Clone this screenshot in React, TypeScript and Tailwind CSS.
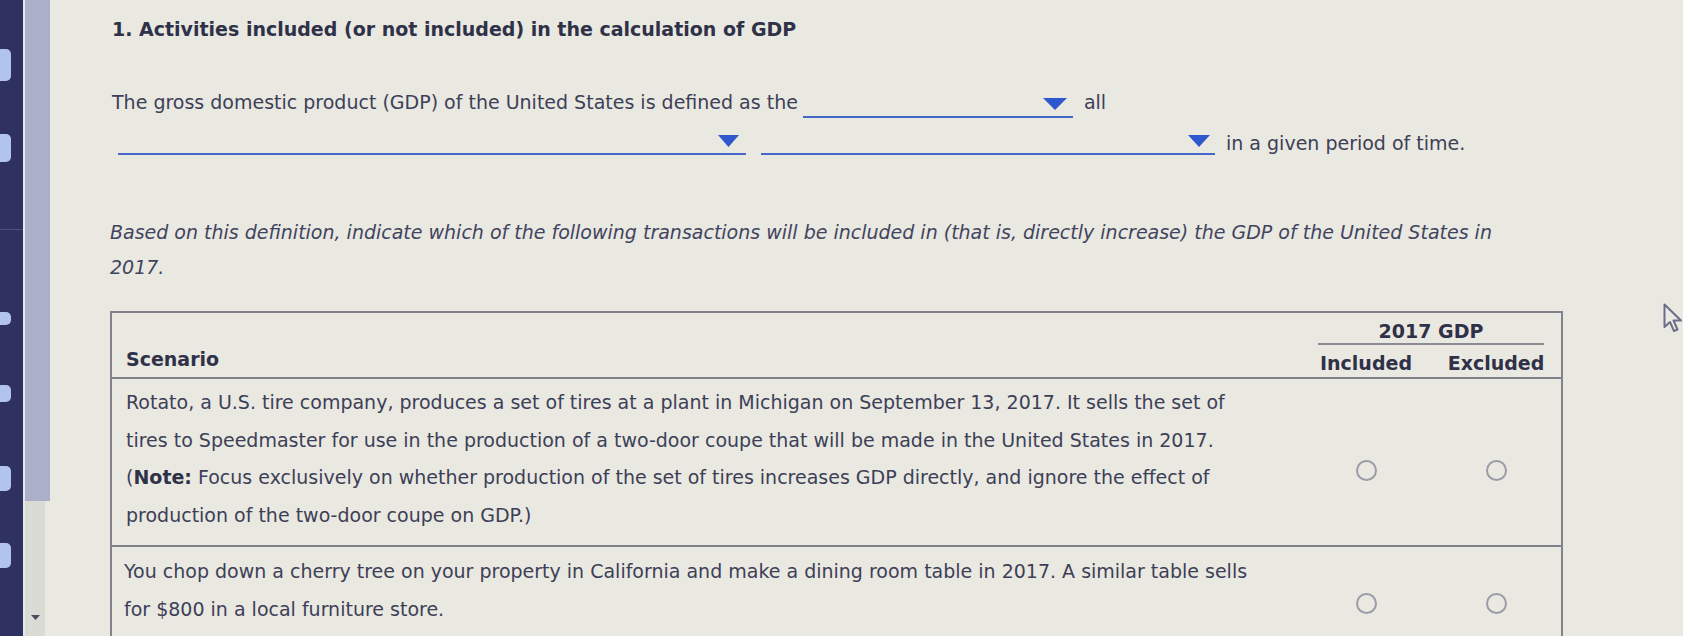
import React from 'react';

const Dropdown = ({ width, arrowW, arrowGap }: { width: string; arrowW: number; arrowGap: string }) => (
  <span className={`flex h-[28px] shrink-0 items-start justify-end border-b-2 border-[#4666c9] ${width}`}>
    <svg className={`mt-[8px] ${arrowGap}`} width={arrowW} height={12} viewBox={`0 0 ${arrowW} 12`}>
      <polygon points={`0,0 ${arrowW},0 ${arrowW / 2},12`} fill="#2f58cf" />
    </svg>
  </span>
);

const Radio = () => <span className="block h-[21px] w-[21px] rounded-full border-2 border-[#9b9ba9]" />;

const Tab = ({ h, mt }: { h: string; mt: string }) => (
  <div className={`${mt} ${h} w-[11px] rounded-r-[5px] bg-[#b3c4ec]`} />
);

export default function App() {
  return (
    <div className="relative flex h-[636px] w-[1683px] overflow-hidden bg-[#e9e8e1] font-['DejaVu_Sans',Verdana,sans-serif] text-[19px] text-[#3d3f57]">
      {/* left nav strip */}
      <div className="flex w-[23px] shrink-0 flex-col bg-[#2f3260]">
        <Tab mt="mt-[49px]" h="h-[32px]" />
        <Tab mt="mt-[53px]" h="h-[28px]" />
        <div className="mt-[67px] h-px w-full bg-[#4c5180]" />
        <Tab mt="mt-[82px]" h="h-[13px]" />
        <Tab mt="mt-[60px]" h="h-[17px]" />
        <Tab mt="mt-[64px]" h="h-[25px]" />
        <Tab mt="mt-[52px]" h="h-[25px]" />
      </div>

      {/* scrollbar */}
      <div className="flex w-[27px] shrink-0 flex-col border-l-2 border-[#e6e8ec]">
        <div className="h-[501px] bg-[#a9b0c8]" />
        <div className="mr-[5px] flex flex-1 flex-col items-center justify-end bg-[#dadbd4] pb-[16px]">
          <svg width={9} height={5} viewBox="0 0 9 5">
            <polygon points="0,0 9,0 4.5,5" fill="#4a4c5c" />
          </svg>
        </div>
      </div>

      <main className="flex-1 pl-[60px] pt-[17px]">
        <h1 className="pl-[2px] text-[19px] font-bold leading-[24px] text-[#2f3148]">
          1. Activities included (or not included) in the calculation of GDP
        </h1>

        <div className="mt-[49px] flex items-start pl-[2px] leading-[24px]">
          <span className="whitespace-nowrap">The gross domestic product (GDP) of the United States is defined as the</span>
          <span className="ml-[5px]">
            <Dropdown width="w-[270px]" arrowW={24} arrowGap="mr-[6px]" />
          </span>
          <span className="ml-[11px]">all</span>
        </div>

        <div className="mt-[9px] flex items-start pl-[8px] leading-[24px]">
          <Dropdown width="w-[628px]" arrowW={21} arrowGap="mr-[7px]" />
          <span className="ml-[15px]">
            <Dropdown width="w-[454px]" arrowW={22} arrowGap="mr-[5px]" />
          </span>
          <span className="ml-[11px] mt-[4px] whitespace-nowrap">in a given period of time.</span>
        </div>

        <p className="mt-[60px] w-[1430px] italic leading-[35px] text-[#41445e]">
          Based on this definition, indicate which of the following transactions will be included in (that is, directly increase) the GDP of the United States in 2017.
        </p>

        <div className="mt-[26px] w-[1453px] border-2 border-b-0 border-[#81828b]">
          <div className="grid grid-cols-[1189px_130px_130px] border-b-2 border-[#81828b] font-bold leading-[24px] text-[#2f3148]">
            <div className="flex items-end pb-[6px] pl-[14px]">Scenario</div>
            <div className="col-span-2 pb-[2px] pt-[6px]">
              <div className="mx-[17px] border-b-2 border-[#8a8b94] text-center">2017 GDP</div>
              <div className="mt-[6px] grid grid-cols-2 text-center">
                <span>Included</span>
                <span>Excluded</span>
              </div>
            </div>
          </div>

          <div className="grid grid-cols-[1189px_130px_130px] border-b-2 border-[#81828b]">
            <div className="pb-[11px] pl-[14px] pr-[46px] pt-[5px] leading-[37.5px]">
              Rotato, a U.S. tire company, produces a set of tires at a plant in Michigan on September 13, 2017. It sells the set of tires to Speedmaster for use in the production of a two-door coupe that will be made in the United States in 2017. (<b className="text-[#2f3148]">Note:</b> Focus exclusively on whether production of the set of tires increases GDP directly, and ignore the effect of production of the two-door coupe on GDP.)
            </div>
            <div className="flex items-center justify-center pt-[16px]">
              <Radio />
            </div>
            <div className="flex items-center justify-center pt-[16px]">
              <Radio />
            </div>
          </div>

          <div className="grid grid-cols-[1189px_130px_130px] border-b-2 border-[#81828b]">
            <div className="pb-[8px] pl-[12px] pr-[46px] pt-[6px] leading-[37.5px]">
              You chop down a cherry tree on your property in California and make a dining room table in 2017. A similar table sells for $800 in a local furniture store.
            </div>
            <div className="flex items-center justify-center pt-[24px]">
              <Radio />
            </div>
            <div className="flex items-center justify-center pt-[24px]">
              <Radio />
            </div>
          </div>
        </div>
      </main>

      {/* mouse pointer */}
      <svg className="absolute left-[1663px] top-[303px]" width={20} height={30} viewBox="0 0 20 30">
        <path d="M1.5 1.5 L1.5 24 L7 19 L11 28 L14.5 26.5 L10.5 17.5 L18 17.5 Z" fill="#eceae6" stroke="#6b6e88" strokeWidth={2} strokeLinejoin="round" />
      </svg>
    </div>
  );
}
